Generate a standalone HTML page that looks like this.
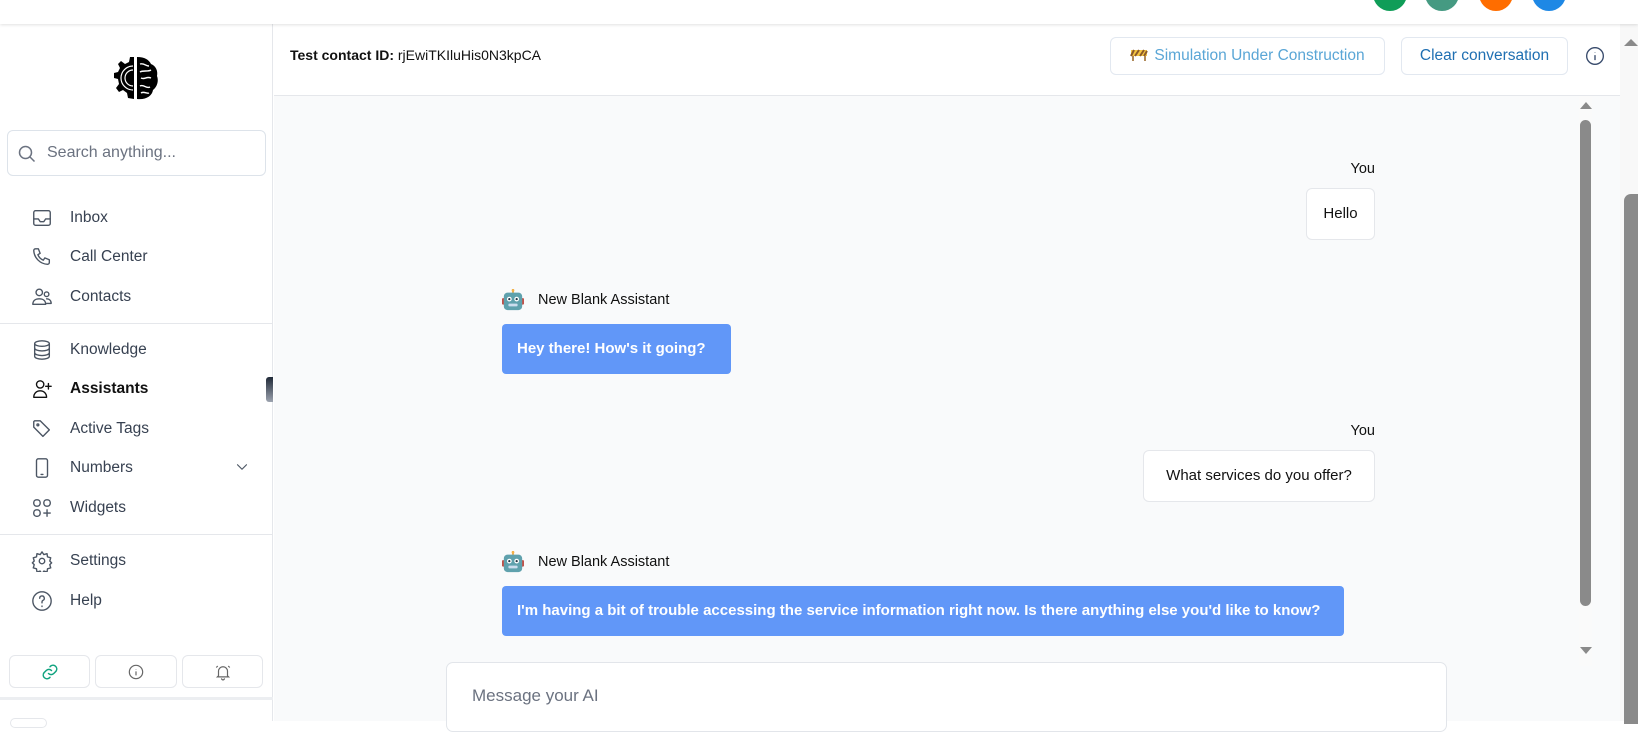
<!DOCTYPE html>
<html><head><meta charset="utf-8"><style>
*{box-sizing:border-box;margin:0;padding:0}
body{width:1638px;height:721px;overflow:hidden;background:#fff;font-family:"Liberation Sans",Arial,sans-serif;position:relative;color:#111}
.abs{position:absolute}
.top{left:0;top:0;width:1638px;height:24px;background:#fff;box-shadow:0 1px 3px rgba(0,0,0,.12);z-index:5}
.dot{position:absolute;width:34px;height:34px;border-radius:50%;top:-23px}
.side{left:0;top:24px;width:273px;height:697px;border-right:1px solid #e5e7eb;background:#fff}
.search{left:7px;top:130px;width:259px;height:46px;border:1px solid #dde3ea;border-radius:6px}
.search span{position:absolute;left:39px;top:13px;font-size:16px;color:#6b7280}
.nav{position:absolute;left:0;width:273px;height:30px}
.nav svg{position:absolute;left:31px;top:4px;width:22px;height:22px;fill:none;stroke:#4b5563;stroke-width:1.5;stroke-linecap:round;stroke-linejoin:round}
.nav span{position:absolute;left:70px;top:6px;font-size:15.5px;color:#374151}
.hr{position:absolute;left:0;width:273px;height:1px;background:#e5e7eb}
.bb{position:absolute;top:655px;height:33px;border:1px solid #e5e7eb;border-radius:6px}
.bb svg{position:absolute;left:50%;top:50%;transform:translate(-50%,-50%)}
.main{left:274px;top:24px;width:1346px;height:697px;background:#f9fafb}
.hdr{left:274px;top:24px;width:1346px;height:72px;background:#fff;border-bottom:1px solid #e5e7eb}
.btn{position:absolute;top:37px;height:38px;border:1px solid #e2e8f0;border-radius:6px;background:#fff;font-size:15.5px;line-height:36px;text-align:center}
.who{position:absolute;font-size:14.5px;color:#111}
.ub{position:absolute;background:#fff;border:1px solid #e5e7eb;border-radius:6px;font-size:15px;color:#111;line-height:50px;text-align:center}
.ab{position:absolute;background:#6197f8;border-radius:4px;font-size:15px;color:#fff;font-weight:bold;line-height:50px;padding-left:15px}
.bot{position:absolute;width:22px;height:22px}
</style></head><body>
<div class="abs top">
<div class="dot" style="left:1373px;background:#0f9d58"></div>
<div class="dot" style="left:1425px;background:#459a82"></div>
<div class="dot" style="left:1479px;background:#ff6d00"></div>
<div class="dot" style="left:1532px;background:#1e88e5"></div>
</div>

<div class="abs side"></div>
<svg class="abs" style="left:113px;top:56px" width="46" height="45" viewBox="0 0 46 45">
<path d="M21 1 L17 1 L16 6 L12 8 L8 5 L5 8 L7 12 L5 16 L1 17 L1 22 L5 23 L6 28 L3 32 L6 36 L10 34 L14 37 L15 42 L21 43 Z" fill="#000"/>
<path d="M20 10 A12 12 0 0 0 20 34" stroke="#fff" stroke-width="1.2" fill="none"/>
<path d="M20 14 A8 8 0 0 0 20 30" stroke="#fff" stroke-width="1.2" fill="none"/>
<path d="M24 1 C32 1 36 4 38 8 C43 10 45 15 44 20 C46 25 44 31 40 34 C39 40 33 44 24 43 Z" fill="#000"/>
<path d="M27 8 C31 7 33 10 36 10 M27 16 C30 14 35 16 38 14 M28 22 C32 24 33 20 38 22 M27 30 C31 28 33 33 37 31 M28 37 C31 35 34 38 36 37" stroke="#fff" stroke-width="1.4" fill="none"/>
</svg>
<div class="abs search"><svg style="position:absolute;left:9px;top:13px" width="20" height="20" viewBox="0 0 20 20" fill="none" stroke="#6b7280" stroke-width="1.5"><circle cx="8.5" cy="8.5" r="6"/><path d="M13 13l4.5 4.5"/></svg><span>Search anything...</span></div>

<div class="nav" style="top:203px"><svg viewBox="0 0 24 24"><path d="M3 13V6a2 2 0 0 1 2-2h14a2 2 0 0 1 2 2v12a2 2 0 0 1-2 2H5a2 2 0 0 1-2-2z"/><path d="M3 13h5l2 3h4l2-3h5"/></svg><span>Inbox</span></div>
<div class="nav" style="top:242px"><svg viewBox="0 0 24 24"><path d="M5 3h3l2 5-2.5 1.5a11 11 0 0 0 6 6L15 13l5 2v3a2 2 0 0 1-2 2A16 16 0 0 1 3 5a2 2 0 0 1 2-2"/></svg><span>Call Center</span></div>
<div class="nav" style="top:282px"><svg viewBox="0 0 24 24"><circle cx="9" cy="7" r="3.5"/><path d="M2 20c0-4 3-6 7-6s7 2 7 6z"/><circle cx="17" cy="9" r="2.5"/><path d="M17 14c3 0 5 2 5 5h-5"/></svg><span>Contacts</span></div>
<div class="hr" style="top:323px"></div>
<div class="nav" style="top:335px"><svg viewBox="0 0 24 24"><ellipse cx="12" cy="5" rx="8" ry="3"/><path d="M4 5v14c0 1.7 3.6 3 8 3s8-1.3 8-3V5M4 10c0 1.7 3.6 3 8 3s8-1.3 8-3M4 15c0 1.7 3.6 3 8 3s8-1.3 8-3"/></svg><span>Knowledge</span></div>
<div class="nav" style="top:374px"><svg viewBox="0 0 24 24" style="stroke:#111"><circle cx="10" cy="7" r="4"/><path d="M3 21c0-4 3-7 7-7s7 3 7 7z"/><path d="M19 6v6M16 9h6"/></svg><span style="color:#111;font-weight:bold">Assistants</span></div>
<div class="abs" style="left:266px;top:377px;width:7px;height:25px;background:linear-gradient(#1f2937,#9ca3af);border-radius:3px 0 0 3px"></div>
<div class="nav" style="top:414px"><svg viewBox="0 0 24 24"><path d="M3 4v6l10 10 7-7L10 3H4z"/><circle cx="7.5" cy="7.5" r="1"/></svg><span>Active Tags</span></div>
<div class="nav" style="top:453px"><svg viewBox="0 0 24 24"><rect x="6" y="2" width="12" height="20" rx="2"/><path d="M11 19h2"/></svg><span>Numbers</span><svg viewBox="0 0 24 24" style="left:233px;top:5px;width:18px;height:18px"><path d="M6 9l6 6 6-6"/></svg></div>
<div class="nav" style="top:493px"><svg viewBox="0 0 24 24"><rect x="3" y="3" width="7" height="7" rx="3"/><rect x="14" y="3" width="7" height="7" rx="3"/><rect x="3" y="14" width="7" height="7" rx="3"/><path d="M17.5 14v7M14 17.5h7"/></svg><span>Widgets</span></div>
<div class="hr" style="top:534px"></div>
<div class="nav" style="top:546px"><svg viewBox="0 0 24 24"><circle cx="12" cy="12" r="3"/><path d="M12 2l2 3 3.5-1 .5 3.5 3.5 1-1 3.5 2 2-2 2 1 3.5-3.5 1-.5 3.5-3.5-1-2 3-2-3-3.5 1-.5-3.5-3.5-1 1-3.5-2-2 2-2-1-3.5 3.5-1L6.5 4 10 5z"/></svg><span>Settings</span></div>
<div class="nav" style="top:586px"><svg viewBox="0 0 24 24"><circle cx="12" cy="12" r="10"/><path d="M9.5 9a2.5 2.5 0 1 1 3.5 2.3c-.7.4-1 1-1 1.7v1M12 17.5v.5"/></svg><span>Help</span></div>

<div class="bb" style="left:9px;width:81px"><svg width="18" height="18" viewBox="0 0 24 24" fill="none" stroke="#10a37f" stroke-width="2" stroke-linecap="round"><path d="M10 14a5 5 0 0 0 7 0l3-3a5 5 0 0 0-7-7l-1 1"/><path d="M14 10a5 5 0 0 0-7 0l-3 3a5 5 0 0 0 7 7l1-1"/></svg></div>
<div class="bb" style="left:95px;width:82px"><svg width="16" height="16" viewBox="0 0 24 24" fill="none" stroke="#666" stroke-width="1.8"><circle cx="12" cy="12" r="10"/><path d="M12 11v6M12 7.5v.5"/></svg></div>
<div class="bb" style="left:182px;width:81px"><svg width="18" height="18" viewBox="0 0 24 24" fill="none" stroke="#666" stroke-width="1.6"><path d="M6 17V11a6 6 0 0 1 12 0v6l1.5 1.5h-15zM10 20.5a2 2 0 0 0 4 0M3 6l2-2M21 6l-2-2"/></svg></div>
<div class="hr" style="top:697px;height:3px;background:#eceef1"></div>
<div class="abs" style="left:10px;top:718px;width:37px;height:10px;border:1px solid #e5e7eb;border-radius:6px"></div>

<div class="abs main"></div>
<div class="abs hdr"></div>
<div class="abs" style="left:290px;top:47px;font-size:14px"><b>Test contact ID:</b> rjEwiTKIluHis0N3kpCA</div>
<div class="btn" style="left:1110px;width:275px;color:#5aa6d6">
<svg width="18" height="14" viewBox="0 0 18 14" style="vertical-align:-1px;margin-right:6px"><rect x="1" y="3" width="16" height="6" fill="#f4c542"/><path d="M4 3l-3 6M9 3l-4 6M14 3l-4 6M17 4l-3 5" stroke="#8b5a2b" stroke-width="2"/><rect x="2" y="9" width="2" height="5" fill="#b08a5a"/><rect x="14" y="9" width="2" height="5" fill="#b08a5a"/></svg>Simulation Under Construction</div>
<div class="btn" style="left:1401px;width:167px;color:#1f6fb2">Clear conversation</div>
<svg class="abs" style="left:1585px;top:46px" width="20" height="20" viewBox="0 0 24 24" fill="none" stroke="#374a6b" stroke-width="1.6"><circle cx="12" cy="12" r="10"/><path d="M12 11v6M12 7.5v.5"/></svg>

<div class="who" style="right:263px;top:161px">You</div>
<div class="ub" style="left:1306px;top:188px;width:69px;height:52px">Hello</div>
<svg class="bot" style="left:502px;top:289px" viewBox="0 0 24 24"><rect x="11" y="0" width="2" height="4" fill="#e5a23a"/><circle cx="12" cy="1.5" r="1.5" fill="#f4b24a"/><rect x="0" y="10" width="3" height="7" rx="1" fill="#c0524a"/><rect x="21" y="10" width="3" height="7" rx="1" fill="#c0524a"/><rect x="2" y="4" width="20" height="19" rx="4" fill="#5fa1ad"/><circle cx="8" cy="11" r="2.6" fill="#fff"/><circle cx="16" cy="11" r="2.6" fill="#fff"/><circle cx="8" cy="11" r="1.2" fill="#234"/><circle cx="16" cy="11" r="1.2" fill="#234"/><rect x="7" y="16" width="10" height="3" rx="1" fill="#cde"/></svg>
<div class="who" style="left:538px;top:292px">New Blank Assistant</div>
<div class="ab" style="left:502px;top:324px;width:229px;height:50px">Hey there! How's it going?</div>

<div class="who" style="right:263px;top:423px">You</div>
<div class="ub" style="left:1143px;top:450px;width:232px;height:52px">What services do you offer?</div>
<svg class="bot" style="left:502px;top:551px" viewBox="0 0 24 24"><rect x="11" y="0" width="2" height="4" fill="#e5a23a"/><circle cx="12" cy="1.5" r="1.5" fill="#f4b24a"/><rect x="0" y="10" width="3" height="7" rx="1" fill="#c0524a"/><rect x="21" y="10" width="3" height="7" rx="1" fill="#c0524a"/><rect x="2" y="4" width="20" height="19" rx="4" fill="#5fa1ad"/><circle cx="8" cy="11" r="2.6" fill="#fff"/><circle cx="16" cy="11" r="2.6" fill="#fff"/><circle cx="8" cy="11" r="1.2" fill="#234"/><circle cx="16" cy="11" r="1.2" fill="#234"/><rect x="7" y="16" width="10" height="3" rx="1" fill="#cde"/></svg>
<div class="who" style="left:538px;top:554px">New Blank Assistant</div>
<div class="ab" style="left:502px;top:586px;width:842px;height:50px">I'm having a bit of trouble accessing the service information right now. Is there anything else you'd like to know?</div>

<div class="abs" style="left:446px;top:662px;width:1001px;height:70px;background:#fff;border:1px solid #e2e5ea;border-radius:7px"></div>
<div class="abs" style="left:472px;top:686px;font-size:17px;color:#6b7280">Message your AI</div>

<div class="abs" style="left:1579px;top:96px;width:13px;height:570px;background:#fafafa"></div>
<div class="abs" style="left:1580px;top:102px;width:0;height:0;border-left:6px solid transparent;border-right:6px solid transparent;border-bottom:7px solid #8a8a8a"></div>
<div class="abs" style="left:1580px;top:120px;width:11px;height:486px;background:#8a8a8a;border-radius:6px"></div>
<div class="abs" style="left:1580px;top:647px;width:0;height:0;border-left:6px solid transparent;border-right:6px solid transparent;border-top:7px solid #8a8a8a"></div>
<div class="abs" style="left:1620px;top:24px;width:18px;height:697px;background:#f8f8f8"></div>
<div class="abs" style="left:1624px;top:39px;width:0;height:0;border-left:7px solid transparent;border-right:7px solid transparent;border-bottom:7px solid #8a8a8a"></div>
<div class="abs" style="left:1624px;top:194px;width:14px;height:530px;background:#8a8a8a;border-radius:7px 0 0 0"></div>
</body></html>
